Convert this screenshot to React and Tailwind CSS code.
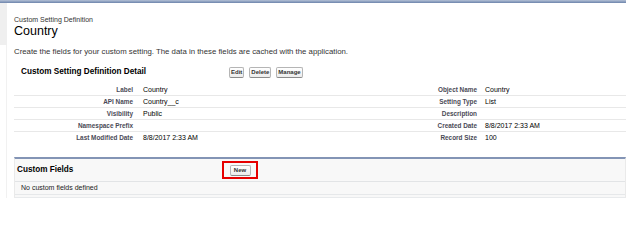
import React from "react";

const leftRows = [
  { label: "Label", value: "Country" },
  { label: "API Name", value: "Country__c" },
  { label: "Visibility", value: "Public" },
  { label: "Namespace Prefix", value: "" },
  { label: "Last Modified Date", value: "8/8/2017 2:33 AM" },
];

const rightRows = [
  { label: "Object Name", value: "Country" },
  { label: "Setting Type", value: "List" },
  { label: "Description", value: "" },
  { label: "Created Date", value: "8/8/2017 2:33 AM" },
  { label: "Record Size", value: "100" },
];

const Btn = ({ children, className = "" }) => (
  <button
    className={`h-[11px] px-[1px] flex items-center justify-center rounded-[2px] border border-[#b5b5b5] border-b-[#8a8a8a] bg-gradient-to-b from-white to-[#ececec] text-[6px] font-bold text-[#333] leading-none ${className}`}
  >
    {children}
  </button>
);

export default function App() {
  return (
    <div className="w-[628px] h-[231px] overflow-hidden bg-white font-['Liberation_Sans',Arial,sans-serif] text-black">
      <div className="h-[3px] w-[626px] bg-gradient-to-b from-[#b4c1d6] to-[#6d84ab]" />
      <div className="flex">
        <div className="w-[7px] flex flex-col">
          <div className="h-[42px] bg-[#efefef]" />
          <div className="flex-1 border-r border-[#f1f1f1]" />
        </div>

        <div className="flex-1 pl-[7px] pr-[2px]">
          <div className="pt-[13px] text-[7px] leading-[8px] text-[#333]">
            Custom Setting Definition
          </div>
          <h1 className="text-[12.5px] leading-[14px] text-black">Country</h1>
          <p className="mt-[9px] text-[7.8px] leading-[9px] text-[#333]">
            Create the fields for your custom setting. The data in these fields are cached with the application.
          </p>

          {/* detail block */}
          <div className="mt-[9px] h-[14px] flex items-center">
            <div className="w-[215px] pl-[7px] text-[8.2px] font-bold">
              Custom Setting Definition Detail
            </div>
            <div className="flex gap-[5px]">
              <Btn>Edit</Btn>
              <Btn>Delete</Btn>
              <Btn>Manage</Btn>
            </div>
          </div>

          <div className="mt-[5px]">
            {leftRows.map((row, i) => (
              <div
                key={row.label}
                className={`h-[12px] flex items-baseline leading-[11.5px] ${i < leftRows.length - 1 ? "border-b border-[#e8e8e8]" : ""}`}
              >
                <div className="w-[122px] pr-[3px] text-right text-[6.4px] font-bold text-[#4a4a56]">
                  {row.label}
                </div>
                <div className="w-[222px] pl-[7px] text-[7px]">{row.value}</div>
                <div className="w-[122px] pr-[3px] text-right text-[6.4px] font-bold text-[#4a4a56]">
                  {rightRows[i].label}
                </div>
                <div className="flex-1 pl-[5px] text-[7px]">{rightRows[i].value}</div>
              </div>
            ))}
          </div>

          {/* custom fields */}
          <div className="mt-[13px] border-t-2 border-[#8394b5] border-x border-x-[#eaeaea] bg-[#f8f8f8]">
            <div className="h-[22px] flex items-center">
              <div className="w-[207px] pl-[2px] text-[8.2px] font-bold">Custom Fields</div>
              <div className="w-[36px] h-[18px] border-2 border-[#e60000] flex items-center justify-center">
                <Btn className="w-[21px]">New</Btn>
              </div>
            </div>
            <div className="h-[13px] flex items-center border-t border-[#e2e4e6] pl-[6px] text-[7px] text-[#222]">
              No custom fields defined
            </div>
            <div className="h-[4px] border-t border-[#e6e8ea] border-b border-b-[#e8eaec]" />
          </div>
        </div>
      </div>
    </div>
  );
}
